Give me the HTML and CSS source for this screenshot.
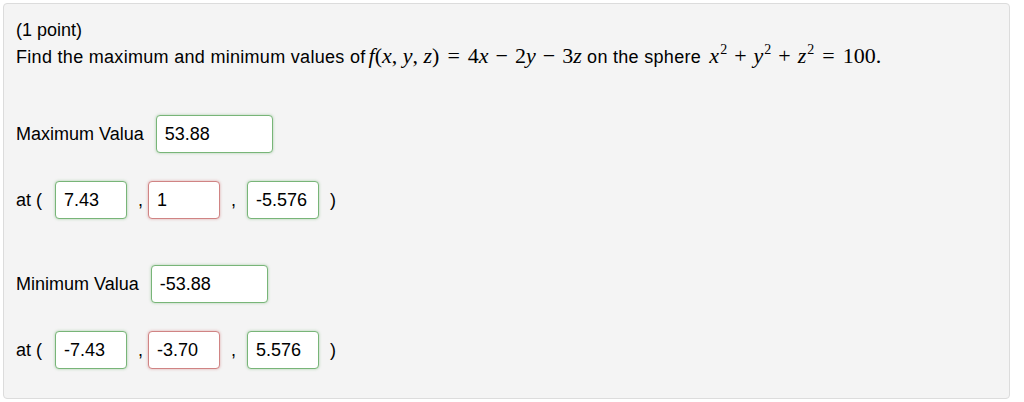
FILE: index.html
```html
<!DOCTYPE html>
<html>
<head>
<meta charset="utf-8">
<link rel="stylesheet" href="styles.css">
</head>
<body>
<div class="problem">
  <div class="line">(1 point)</div>
  <div class="line question">Find the maximum and minimum values of<span class="math"><i>f</i>(<i>x</i>, <i>y</i>, <i>z</i>)<span class="rel">=</span>4<i>x</i><span class="op">−</span>2<i>y</i><span class="op">−</span>3<i>z</i></span> on the sphere <span class="math"><i>x</i><sup>2</sup><span class="op">+</span><i>y</i><sup>2</sup><span class="op">+</span><i>z</i><sup>2</sup><span class="rel">=</span>100.</span></div>

  <div class="row row-value">
    <span class="label">Maximum Valua</span>
    <span class="field wide ok">53.88</span>
  </div>
  <div class="row row-point">
    <span class="label at">at (</span>
    <span class="field ok">7.43</span>
    <span class="sep">,</span>
    <span class="field bad">1</span>
    <span class="sep">,</span>
    <span class="field ok">-5.576</span>
    <span class="sep close">)</span>
  </div>

  <div class="row row-value second">
    <span class="label">Minimum Valua</span>
    <span class="field wide ok">-53.88</span>
  </div>
  <div class="row row-point">
    <span class="label at">at (</span>
    <span class="field ok">-7.43</span>
    <span class="sep">,</span>
    <span class="field bad">-3.70</span>
    <span class="sep">,</span>
    <span class="field ok">5.576</span>
    <span class="sep close">)</span>
  </div>
</div>
</body>
</html>
```

FILE: styles.css
```css
html, body {
  margin: 0;
  padding: 0;
  background: #ffffff;
}

body {
  font-family: "Liberation Sans", Arial, sans-serif;
  font-size: 18px;
  color: #000;
}

.problem {
  margin: 3px 0 0 3px;
  width: 1007px;
  height: 396px;
  box-sizing: border-box;
  border: 1px solid #dcdcdc;
  border-radius: 4px;
  background: #f4f4f4;
  padding: 13px 12px;
}

.line {
  line-height: 27px;
  height: 27px;
  white-space: nowrap;
}

.question {
  letter-spacing: 0.3px;
}

.math {
  font-family: "Liberation Serif", "Times New Roman", serif;
  font-size: 22px;
  line-height: 1;
  letter-spacing: 0;
  margin-left: 3px;
}

.math i {
  font-style: italic;
}

.math sup {
  font-size: 14px;
  line-height: 0;
  vertical-align: 9px;
  margin-left: 1px;
}

.rel {
  margin: 0 8px;
}

.op {
  margin: 0 7px;
}

.row {
  display: flex;
  align-items: center;
  height: 38px;
}

.row-value {
  margin-top: 44px;
}

.row-value.second {
  margin-top: 46px;
}

.row-point {
  margin-top: 28px;
}

.label {
  margin-right: 12px;
}

.label.at {
  margin-right: 13px;
}

.field {
  box-sizing: border-box;
  height: 38px;
  width: 72px;
  padding: 0 8px;
  display: flex;
  align-items: center;
  background: #fff;
  border-radius: 4px;
  white-space: nowrap;
}

.field.wide {
  width: 117px;
}

.field.ok {
  border: 1px solid #78b578;
  box-shadow: 0 0 3px rgba(60, 150, 60, 0.4);
}

.field.bad {
  border: 1px solid #d08484;
  box-shadow: 0 0 3px rgba(190, 60, 60, 0.4);
}

.sep {
  margin: 0 5px 0 11px;
}

.row-point .bad + .sep {
  margin-right: 11px;
}

.close {
  margin-left: 11px;
}
```
